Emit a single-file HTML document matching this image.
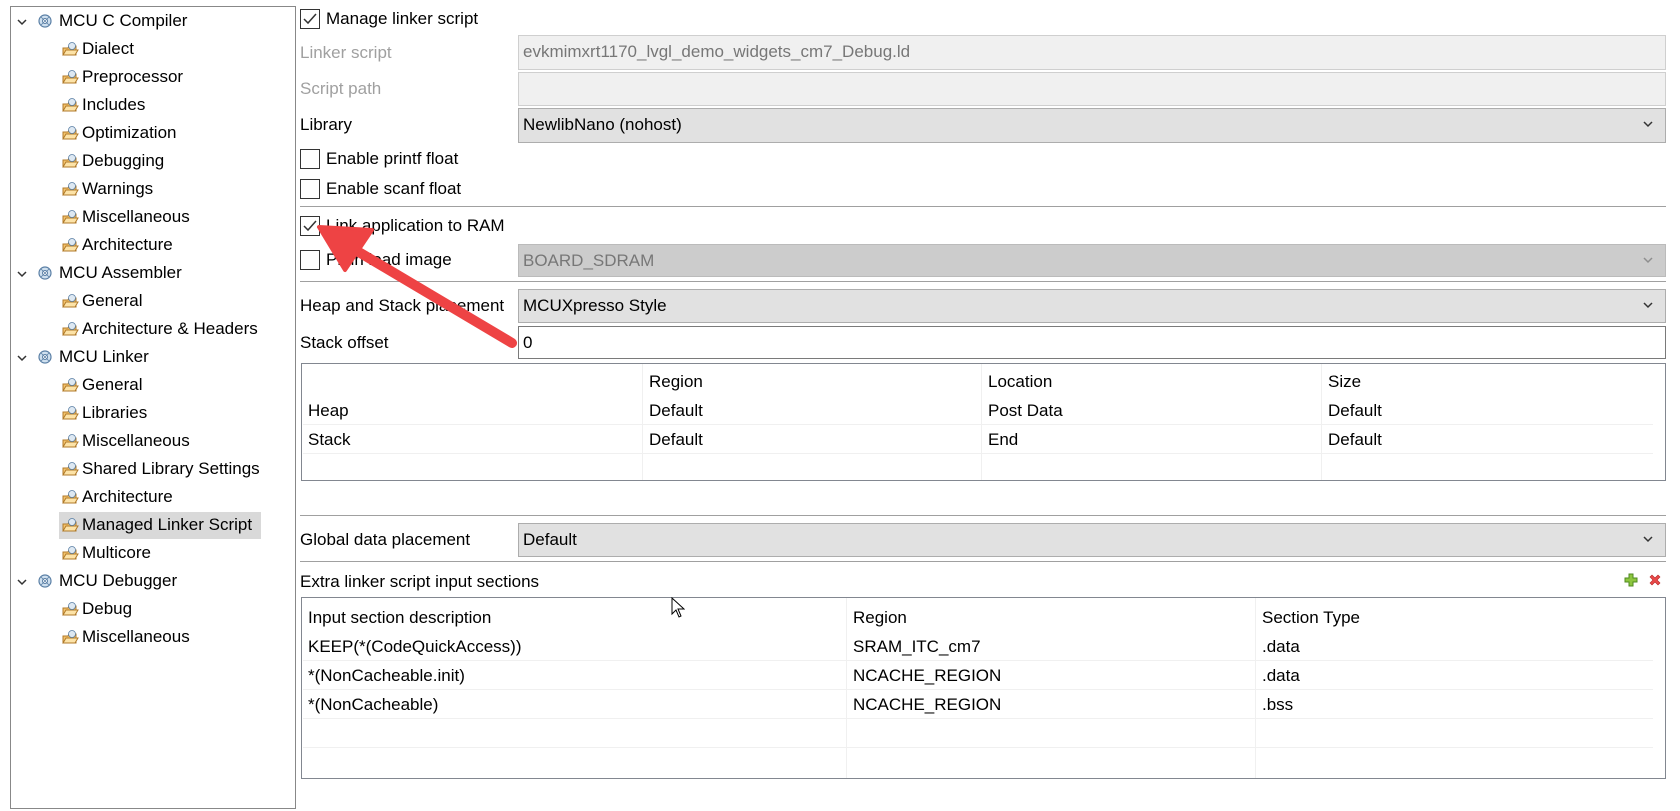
<!DOCTYPE html>
<html><head><meta charset="utf-8"><style>
*{margin:0;padding:0;box-sizing:border-box}
body{width:1680px;height:811px;background:#fff;font-family:"Liberation Sans",sans-serif;font-size:16px;color:#000;position:relative;overflow:hidden}
.a{position:absolute;white-space:nowrap}
.t{line-height:20px}
.tree{position:absolute;left:10px;top:6px;width:286px;height:803px;border:1px solid #888}
.sel{position:absolute;left:59px;top:512px;width:202px;height:27px;background:#d9d9d9}
.cb{position:absolute;width:20px;height:20px;border:1px solid #333;background:#fff}
.fld{position:absolute;left:518px;width:1148px;border:1px solid #cfcfcf;background:#f0f0f0;padding-left:4px;line-height:32px;color:#777}
.cmb{position:absolute;left:518px;width:1148px;border:1px solid #adadad;background:#e1e1e1;padding-left:4px;line-height:32px}
.cmb svg{position:absolute;right:10px;top:12px}
.sep{position:absolute;left:300px;width:1366px;height:1px;background:#a0a0a0}
.tbl{position:absolute;left:301px;width:1365px;border:1px solid #828790;background:#fff}
.hl{position:absolute;left:1px;right:12px;height:1px;background:#f0f0f0}
.vl{position:absolute;width:1px;background:#f0f0f0}
</style></head><body>
<div class="tree"></div>
<div class="sel"></div>
<svg width="0" height="0" style="position:absolute"><defs>
<g id="gear"><circle cx="7" cy="7" r="6" fill="#cfe0ef" stroke="#5a7fa5" stroke-width="1.2"/><circle cx="7" cy="7" r="2.5" fill="#fff" stroke="#5a7fa5"/><path d="M3 3l8 8M11 3l-8 8" stroke="#5a7fa5" stroke-width="0.8"/></g>
<g id="fold"><path d="M1 7h5l1-2h7v9H1z" fill="#f5c36b" stroke="#b07a2a"/><path d="M1 14l3-5h12l-3 5z" fill="#fde3a7" stroke="#b07a2a"/><circle cx="10" cy="5" r="3.5" fill="#dde8f2" stroke="#5a7fa5" stroke-width="0.8"/></g>
<g id="chev"><path d="M1 1l4 4 4-4" fill="none" stroke="#333" stroke-width="1.5"/></g>
</defs></svg>
<!-- tree rows -->
<div id="tr"></div>
<script></script>
<div class="a t" style="left:0;top:0">
</div>
<!-- generated statically -->
<svg class="a" style="left:17px;top:19px" width="10" height="7"><use href="#chev"/></svg><svg class="a" style="left:38px;top:14px" width="15" height="15"><use href="#gear"/></svg><div class="a t" style="left:59px;top:11px;font-size:17px">MCU C Compiler</div>
<svg class="a" style="left:62px;top:41px" width="17" height="16"><use href="#fold"/></svg><div class="a t" style="left:82px;top:39px;font-size:17px">Dialect</div>
<svg class="a" style="left:62px;top:69px" width="17" height="16"><use href="#fold"/></svg><div class="a t" style="left:82px;top:67px;font-size:17px">Preprocessor</div>
<svg class="a" style="left:62px;top:97px" width="17" height="16"><use href="#fold"/></svg><div class="a t" style="left:82px;top:95px;font-size:17px">Includes</div>
<svg class="a" style="left:62px;top:125px" width="17" height="16"><use href="#fold"/></svg><div class="a t" style="left:82px;top:123px;font-size:17px">Optimization</div>
<svg class="a" style="left:62px;top:153px" width="17" height="16"><use href="#fold"/></svg><div class="a t" style="left:82px;top:151px;font-size:17px">Debugging</div>
<svg class="a" style="left:62px;top:181px" width="17" height="16"><use href="#fold"/></svg><div class="a t" style="left:82px;top:179px;font-size:17px">Warnings</div>
<svg class="a" style="left:62px;top:209px" width="17" height="16"><use href="#fold"/></svg><div class="a t" style="left:82px;top:207px;font-size:17px">Miscellaneous</div>
<svg class="a" style="left:62px;top:237px" width="17" height="16"><use href="#fold"/></svg><div class="a t" style="left:82px;top:235px;font-size:17px">Architecture</div>
<svg class="a" style="left:17px;top:271px" width="10" height="7"><use href="#chev"/></svg><svg class="a" style="left:38px;top:266px" width="15" height="15"><use href="#gear"/></svg><div class="a t" style="left:59px;top:263px;font-size:17px">MCU Assembler</div>
<svg class="a" style="left:62px;top:293px" width="17" height="16"><use href="#fold"/></svg><div class="a t" style="left:82px;top:291px;font-size:17px">General</div>
<svg class="a" style="left:62px;top:321px" width="17" height="16"><use href="#fold"/></svg><div class="a t" style="left:82px;top:319px;font-size:17px">Architecture &amp; Headers</div>
<svg class="a" style="left:17px;top:355px" width="10" height="7"><use href="#chev"/></svg><svg class="a" style="left:38px;top:350px" width="15" height="15"><use href="#gear"/></svg><div class="a t" style="left:59px;top:347px;font-size:17px">MCU Linker</div>
<svg class="a" style="left:62px;top:377px" width="17" height="16"><use href="#fold"/></svg><div class="a t" style="left:82px;top:375px;font-size:17px">General</div>
<svg class="a" style="left:62px;top:405px" width="17" height="16"><use href="#fold"/></svg><div class="a t" style="left:82px;top:403px;font-size:17px">Libraries</div>
<svg class="a" style="left:62px;top:433px" width="17" height="16"><use href="#fold"/></svg><div class="a t" style="left:82px;top:431px;font-size:17px">Miscellaneous</div>
<svg class="a" style="left:62px;top:461px" width="17" height="16"><use href="#fold"/></svg><div class="a t" style="left:82px;top:459px;font-size:17px">Shared Library Settings</div>
<svg class="a" style="left:62px;top:489px" width="17" height="16"><use href="#fold"/></svg><div class="a t" style="left:82px;top:487px;font-size:17px">Architecture</div>
<svg class="a" style="left:62px;top:517px" width="17" height="16"><use href="#fold"/></svg><div class="a t" style="left:82px;top:515px;font-size:17px">Managed Linker Script</div>
<svg class="a" style="left:62px;top:545px" width="17" height="16"><use href="#fold"/></svg><div class="a t" style="left:82px;top:543px;font-size:17px">Multicore</div>
<svg class="a" style="left:17px;top:579px" width="10" height="7"><use href="#chev"/></svg><svg class="a" style="left:38px;top:574px" width="15" height="15"><use href="#gear"/></svg><div class="a t" style="left:59px;top:571px;font-size:17px">MCU Debugger</div>
<svg class="a" style="left:62px;top:601px" width="17" height="16"><use href="#fold"/></svg><div class="a t" style="left:82px;top:599px;font-size:17px">Debug</div>
<svg class="a" style="left:62px;top:629px" width="17" height="16"><use href="#fold"/></svg><div class="a t" style="left:82px;top:627px;font-size:17px">Miscellaneous</div>

<!-- right panel -->
<div class="cb" style="left:300px;top:9px"><svg width="18" height="18"><path d="M3 9l4 4 8-9" fill="none" stroke="#333" stroke-width="1.5"/></svg></div>
<div class="a t" style="left:326px;top:9px;font-size:17px">Manage linker script</div>
<div class="a t" style="left:300px;top:43px;font-size:17px;color:#a0a0a0">Linker script</div>
<div class="fld" style="top:35px;height:35px;font-size:17px">evkmimxrt1170_lvgl_demo_widgets_cm7_Debug.ld</div>
<div class="a t" style="left:300px;top:79px;font-size:17px;color:#a0a0a0">Script path</div>
<div class="fld" style="top:72px;height:34px"></div>
<div class="a t" style="left:300px;top:115px;font-size:17px">Library</div>
<div class="cmb" style="top:108px;height:35px;font-size:17px">NewlibNano (nohost)<svg width="12" height="8"><use href="#chev"/></svg></div>
<div class="cb" style="left:300px;top:149px"></div><div class="a t" style="left:326px;top:149px;font-size:17px">Enable printf float</div>
<div class="cb" style="left:300px;top:179px"></div><div class="a t" style="left:326px;top:179px;font-size:17px">Enable scanf float</div>
<div class="sep" style="top:206px"></div>
<div class="cb" style="left:300px;top:216px"><svg width="18" height="18"><path d="M3 9l4 4 8-9" fill="none" stroke="#333" stroke-width="1.5"/></svg></div>
<div class="a t" style="left:326px;top:216px;font-size:17px">Link application to RAM</div>
<div class="cb" style="left:300px;top:250px"></div><div class="a t" style="left:326px;top:250px;font-size:17px">Plain load image</div>
<div class="cmb" style="top:244px;height:33px;background:#ccc;border-color:#bbb;color:#777;font-size:17px">BOARD_SDRAM<svg width="12" height="8" style="opacity:.4"><use href="#chev"/></svg></div>
<div class="sep" style="top:281px"></div>
<div class="a t" style="left:300px;top:296px;font-size:17px">Heap and Stack placement</div>
<div class="cmb" style="top:289px;height:34px;font-size:17px">MCUXpresso Style<svg width="12" height="8"><use href="#chev"/></svg></div>
<div class="a t" style="left:300px;top:333px;font-size:17px">Stack offset</div>
<div class="a" style="left:518px;top:326px;width:1148px;height:33px;border:1px solid #7a7a7a;padding-left:4px;line-height:31px;font-size:17px">0</div>

<div class="tbl" style="top:363px;height:118px">
 <div class="vl" style="left:340px;top:0;height:116px"></div>
 <div class="vl" style="left:679px;top:0;height:116px"></div>
 <div class="vl" style="left:1019px;top:0;height:116px"></div>
 <div class="hl" style="top:60px"></div><div class="hl" style="top:89px"></div>
 <div class="a t" style="left:347px;top:8px;font-size:17px">Region</div>
 <div class="a t" style="left:686px;top:8px;font-size:17px">Location</div>
 <div class="a t" style="left:1026px;top:8px;font-size:17px">Size</div>
 <div class="a t" style="left:6px;top:37px;font-size:17px">Heap</div>
 <div class="a t" style="left:347px;top:37px;font-size:17px">Default</div>
 <div class="a t" style="left:686px;top:37px;font-size:17px">Post Data</div>
 <div class="a t" style="left:1026px;top:37px;font-size:17px">Default</div>
 <div class="a t" style="left:6px;top:66px;font-size:17px">Stack</div>
 <div class="a t" style="left:347px;top:66px;font-size:17px">Default</div>
 <div class="a t" style="left:686px;top:66px;font-size:17px">End</div>
 <div class="a t" style="left:1026px;top:66px;font-size:17px">Default</div>
</div>
<div class="sep" style="top:515px"></div>
<div class="a t" style="left:300px;top:530px;font-size:17px">Global data placement</div>
<div class="cmb" style="top:523px;height:34px;font-size:17px">Default<svg width="12" height="8"><use href="#chev"/></svg></div>
<div class="sep" style="top:561px"></div>
<div class="a t" style="left:300px;top:572px;font-size:17px">Extra linker script input sections</div>
<svg class="a" style="left:1624px;top:573px" width="14" height="14"><path d="M5 1h4v4h4v4H9v4H5V9H1V5h4z" fill="#8dc63f" stroke="#4f8a1f"/></svg>
<svg class="a" style="left:1648px;top:573px" width="14" height="14"><path d="M2 4l2-2 3 3 3-3 2 2-3 3 3 3-2 2-3-3-3 3-2-2 3-3z" fill="#e84a4a" stroke="#b52020" stroke-width=".6"/></svg>
<div class="tbl" style="top:597px;height:182px">
 <div class="vl" style="left:544px;top:0;height:180px"></div>
 <div class="vl" style="left:953px;top:0;height:180px"></div>
 <div class="hl" style="top:62px"></div><div class="hl" style="top:91px"></div><div class="hl" style="top:120px"></div><div class="hl" style="top:149px"></div>
 <div class="a t" style="left:6px;top:10px;font-size:17px">Input section description</div>
 <div class="a t" style="left:551px;top:10px;font-size:17px">Region</div>
 <div class="a t" style="left:960px;top:10px;font-size:17px">Section Type</div>
 <div class="a t" style="left:6px;top:39px;font-size:17px">KEEP(*(CodeQuickAccess))</div>
 <div class="a t" style="left:551px;top:39px;font-size:17px">SRAM_ITC_cm7</div>
 <div class="a t" style="left:960px;top:39px;font-size:17px">.data</div>
 <div class="a t" style="left:6px;top:68px;font-size:17px">*(NonCacheable.init)</div>
 <div class="a t" style="left:551px;top:68px;font-size:17px">NCACHE_REGION</div>
 <div class="a t" style="left:960px;top:68px;font-size:17px">.data</div>
 <div class="a t" style="left:6px;top:97px;font-size:17px">*(NonCacheable)</div>
 <div class="a t" style="left:551px;top:97px;font-size:17px">NCACHE_REGION</div>
 <div class="a t" style="left:960px;top:97px;font-size:17px">.bss</div>
</div>
<svg class="a" style="left:671px;top:597px" width="14" height="22"><path d="M1 1v16l4-4 3 7 2-1-3-7h6z" fill="#fff" stroke="#000"/></svg>
<!-- red arrow -->
<svg class="a" style="left:0;top:0" width="1680" height="811"><line x1="512" y1="343" x2="352" y2="248" stroke="#ee4344" stroke-width="10" stroke-linecap="round"/><path d="M319 227L372 230L345 270Z" fill="#ee4344" stroke="#ee4344" stroke-width="4" stroke-linejoin="round"/></svg>
</body></html>
